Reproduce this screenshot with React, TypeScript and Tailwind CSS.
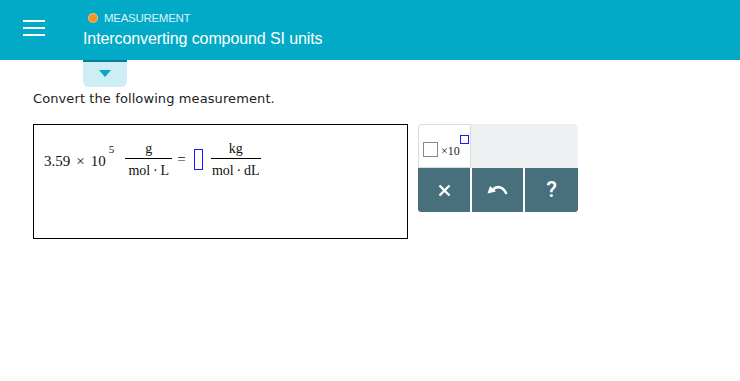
import { useState } from "react";

const serif = "font-['Liberation_Serif',serif]";

function Fraction({ top, bottom, width }: { top: string; bottom: React.ReactNode; width: string }) {
    return (
        <div className={`flex flex-col items-center ${width}`}>
            <div className="h-[19px] leading-[19px] text-[14px]">{top}</div>
            <div className="h-px w-full bg-black" />
            <div className="h-[19px] leading-[19px] text-[14px] mt-[2px]">{bottom}</div>
        </div>
    );
}

export default function App() {
    const [answer] = useState("");

    return (
        <div className="w-[740px] h-[381px] bg-white overflow-hidden font-['Liberation_Sans',sans-serif]">
            {/* Header */}
            <div className="h-[60px] bg-[#02aac7] flex items-start">
                <button className="w-[22px] mt-[20px] ml-[23px] flex flex-col gap-[5px]">
                    <span className="block h-[2px] w-[22px] bg-white" />
                    <span className="block h-[2px] w-[22px] bg-white" />
                    <span className="block h-[2px] w-[22px] bg-white" />
                </button>
                <div className="ml-[38px] mt-[11px]">
                    <div className="flex items-center gap-[6px] pl-[5px]">
                        <span className="w-[10px] h-[10px] rounded-full bg-[#f7931e] border border-white/40" />
                        <span className="text-[11.5px] leading-[14px] text-[#d9f3f8] tracking-tight">MEASUREMENT</span>
                    </div>
                    <div className="text-[16px] leading-[20px] text-white mt-[4px] tracking-[-0.1px]">
                        Interconverting compound SI units
                    </div>
                </div>
            </div>

            {/* Collapse tab */}
            <div className="ml-[83px] w-[44px] h-[27px] bg-[#cdeef5] rounded-b-[6px] border-t-2 border-[#0a7f94] flex justify-center pt-[8px]">
                <svg width="12" height="7" viewBox="0 0 12 7">
                    <path d="M0 0 H12 L6 7 Z" fill="#0aa6c4" />
                </svg>
            </div>

            <div className="pl-[33px]">
                <p className="mt-[4px] text-[13px] leading-[16px] text-[#222] font-['DejaVu_Sans',sans-serif] tracking-[0.1px]">
                    Convert the following measurement.
                </p>

                <div className="flex items-start gap-[10px] mt-[17px]">
                    {/* Question box */}
                    <div className={`w-[375px] h-[115px] border border-black ${serif} text-[#111]`}>
                        <div className="flex items-start mt-[14px] ml-[10px]">
                            <div className="flex items-start mt-[13px] text-[15px] leading-[18px]">
                                <span>3.59</span>
                                <span className="mx-[6px]">×</span>
                                <span>10</span>
                                <span className="text-[11px] leading-[11px] -mt-[8px] ml-[3px]">5</span>
                            </div>
                            <Fraction top="g" bottom={<span>mol&thinsp;·&thinsp;L</span>} width="w-[47px] ml-[11px]" />
                            <span className="text-[15px] leading-[18px] mt-[11px] ml-[5px] mr-[8px]">=</span>
                            <div className="w-[9px] h-[21px] border border-[#1a1aff] mt-[10px]">{answer}</div>
                            <Fraction top="kg" bottom={<span>mol&thinsp;·&thinsp;dL</span>} width="w-[50px] ml-[8px]" />
                        </div>
                    </div>

                    {/* Tool panel */}
                    <div className="w-[160px] h-[88px] rounded-[4px] overflow-hidden flex flex-col">
                        <div className="h-[44px] bg-[#eef1f2] flex">
                            <div className="w-[53px] bg-white border border-[#d5dcdf] rounded-tl-[4px] flex items-start pl-[4px] pt-[17px]">
                                <div className="w-[15px] h-[15px] border border-[#8a8a8a]" />
                                <span className={`${serif} text-[12px] leading-[14px] ml-[3px] mt-[2px] text-[#222]`}>×10</span>
                                <div className="w-[9px] h-[9px] border border-[#1a1aff] -mt-[7px]" />
                            </div>
                        </div>
                        <div className="flex-1 flex bg-[#476f7c]">
                            <button className="w-[52px] bg-[#476f7c] flex items-center justify-center">
                                <svg width="13" height="13" viewBox="0 0 13 13">
                                    <path d="M1.5 1.5 L11.5 11.5 M11.5 1.5 L1.5 11.5" stroke="white" strokeWidth="2.4" />
                                </svg>
                            </button>
                            <div className="w-[2px] bg-white" />
                            <button className="w-[51px] bg-[#476f7c] flex items-center justify-center">
                                <svg width="23" height="12" viewBox="0 0 22 12">
                                    <path d="M6 6 C10 1.5 16 2 19.5 9" stroke="white" strokeWidth="2.6" fill="none" strokeLinecap="round" />
                                    <path d="M1 9.5 L3.5 2 L9.5 7.5 Z" fill="white" />
                                </svg>
                            </button>
                            <div className="w-[2px] bg-white" />
                            <button className="flex-1 bg-[#476f7c] flex items-center justify-center text-white text-[22px] font-medium leading-none pb-[1px] font-['Roboto',sans-serif]">
                                ?
                            </button>
                        </div>
                    </div>
                </div>
            </div>
        </div>
    );
}
